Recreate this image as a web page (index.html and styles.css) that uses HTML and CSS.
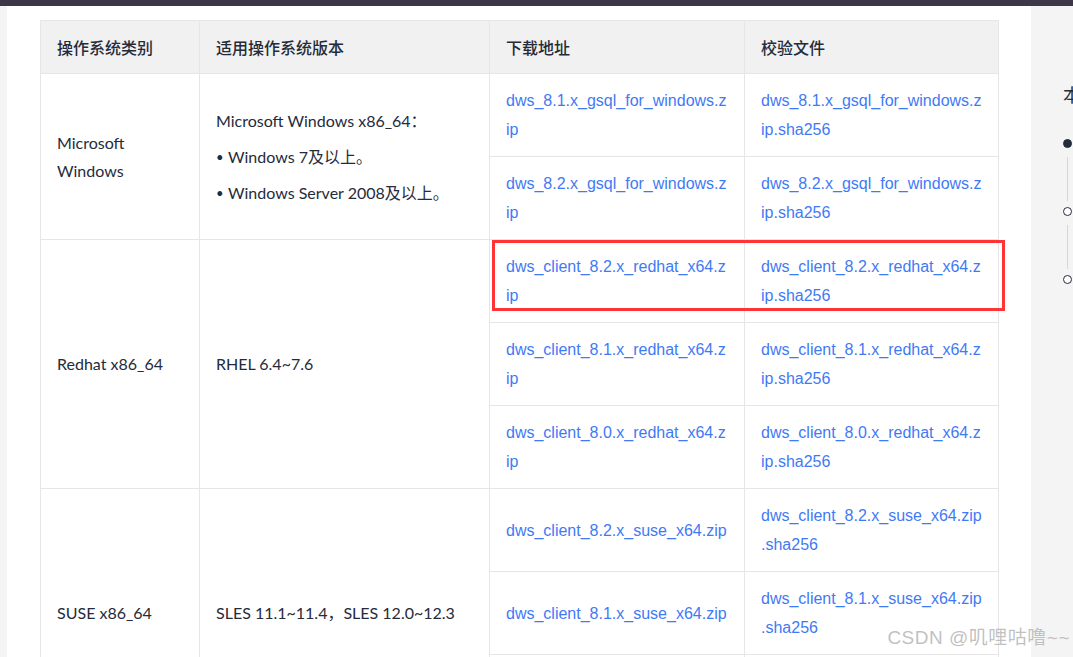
FILE: index.html
```html
<!DOCTYPE html>
<html lang="zh-CN">
<head>
<meta charset="utf-8">
<title>下载地址</title>
<link rel="stylesheet" href="styles.css">
</head>
<body>
<div class="topbar"></div>
<div class="page">
  <div class="left-strip"></div>
  <main class="main">
    <div class="table-wrap">
      <table class="dl-table">
        <colgroup>
          <col class="c1"><col class="c2"><col class="c3"><col class="c4">
        </colgroup>
        <thead>
          <tr><th>操作系统类别</th><th>适用操作系统版本</th><th>下载地址</th><th>校验文件</th></tr>
        </thead>
        <tbody>
          <tr>
            <td rowspan="2">Microsoft Windows</td>
            <td rowspan="2">
              <p class="ver-title">Microsoft Windows x86_64：</p>
              <ul class="ver-list">
                <li>Windows 7及以上。</li>
                <li>Windows Server 2008及以上。</li>
              </ul>
            </td>
            <td class="link"><a href="#">dws_8.1.x_gsql_for_windows.zip</a></td>
            <td class="link"><a href="#">dws_8.1.x_gsql_for_windows.zip.sha256</a></td>
          </tr>
          <tr>
            <td class="link"><a href="#">dws_8.2.x_gsql_for_windows.zip</a></td>
            <td class="link"><a href="#">dws_8.2.x_gsql_for_windows.zip.sha256</a></td>
          </tr>
          <tr>
            <td rowspan="3">Redhat x86_64</td>
            <td rowspan="3">RHEL 6.4~7.6</td>
            <td class="link"><a href="#">dws_client_8.2.x_redhat_x64.zip</a></td>
            <td class="link"><a href="#">dws_client_8.2.x_redhat_x64.zip.sha256</a></td>
          </tr>
          <tr>
            <td class="link"><a href="#">dws_client_8.1.x_redhat_x64.zip</a></td>
            <td class="link"><a href="#">dws_client_8.1.x_redhat_x64.zip.sha256</a></td>
          </tr>
          <tr>
            <td class="link"><a href="#">dws_client_8.0.x_redhat_x64.zip</a></td>
            <td class="link"><a href="#">dws_client_8.0.x_redhat_x64.zip.sha256</a></td>
          </tr>
          <tr>
            <td rowspan="3">SUSE x86_64</td>
            <td rowspan="3">SLES 11.1~11.4，SLES 12.0~12.3</td>
            <td class="link"><a href="#">dws_client_8.2.x_suse_x64.zip</a></td>
            <td class="link"><a href="#">dws_client_8.2.x_suse_x64.zip.sha256</a></td>
          </tr>
          <tr>
            <td class="link"><a href="#">dws_client_8.1.x_suse_x64.zip</a></td>
            <td class="link"><a href="#">dws_client_8.1.x_suse_x64.zip.sha256</a></td>
          </tr>
          <tr>
            <td class="link"><a href="#">dws_client_8.0.x_suse_x64.zip</a></td>
            <td class="link"><a href="#">dws_client_8.0.x_suse_x64.zip.sha256</a></td>
          </tr>
        </tbody>
      </table>
      <div class="highlight-box"></div>
    </div>
  </main>
  <aside class="aside">
    <div class="aside-title">本页目录</div>
    <ul class="toc">
      <li class="toc-item active"><span class="toc-dot"></span><span class="toc-line"></span></li>
      <li class="toc-item"><span class="toc-dot"></span><span class="toc-line"></span></li>
      <li class="toc-item"><span class="toc-dot"></span></li>
    </ul>
  </aside>
</div>
<div class="watermark">CSDN @叽哩咕噜~~</div>
</body>
</html>
```

FILE: styles.css
```css
html, body {
  margin: 0;
  padding: 0;
  background: #ffffff;
}

body {
  font-family: "Lato", "Noto Sans CJK SC", sans-serif;
  color: #252b3a;
  overflow: hidden;
  height: 657px;
  position: relative;
}

.topbar {
  height: 6px;
  background: #3d3548;
}

.page {
  display: flex;
  align-items: stretch;
  min-height: 651px;
}

.left-strip {
  width: 7px;
  flex: none;
  background: #f4f4f4;
}

.main {
  flex: 1;
  padding: 14px 0 0 33px;
}

.aside {
  width: 42px;
  flex: none;
  background: #f4f4f4;
  padding-left: 32px;
  box-sizing: border-box;
  overflow: hidden;
  white-space: nowrap;
}

.table-wrap {
  position: relative;
  width: 958px;
}

.dl-table {
  border-collapse: collapse;
  table-layout: fixed;
  width: 958px;
  font-size: 16px;
}

.c1 { width: 159px; }
.c2 { width: 290px; }
.c3 { width: 255px; }
.c4 { width: 254px; }

.dl-table th,
.dl-table td {
  border: 1px solid #e6e6e6;
  text-align: left;
  vertical-align: middle;
}

.dl-table th {
  background: #f1f1f1;
  font-family: "Noto Sans CJK SC", sans-serif;
  font-weight: 500;
  font-size: 16px;
  line-height: 24px;
  padding: 14px 16px;
  color: #252b3a;
}

.dl-table td {
  padding: 12px 16px;
  line-height: 28px;
}

.dl-table td.link {
  line-height: 29px;
  font-family: "Liberation Sans", "Noto Sans CJK SC", sans-serif;
  word-break: break-all;
  line-break: anywhere;
}

.dl-table td.link a {
  color: #3f7af5;
  text-decoration: none;
}

.ver-title {
  margin: 0;
}

.ver-list {
  list-style: none;
  margin: 0;
  padding: 0;
}

.ver-list li {
  margin-top: 8px;
}

.ver-list li::before {
  content: "•";
  display: inline-block;
  width: 12px;
  font-size: 13px;
  vertical-align: 1px;
}

.highlight-box {
  position: absolute;
  left: 452px;
  top: 220px;
  width: 513px;
  height: 71px;
  border: 3px solid #ff3434;
  box-sizing: border-box;
  pointer-events: none;
}

.aside-title {
  margin-top: 77px;
  font-family: "Noto Sans CJK SC", sans-serif;
  font-size: 18px;
  line-height: 22px;
  color: #252b3a;
}

.toc {
  list-style: none;
  margin: 34px 0 0 0;
  padding: 0;
}

.toc-item {
  display: flex;
  flex-direction: column;
  align-items: flex-start;
}

.toc-dot {
  width: 9px;
  height: 9px;
  border-radius: 50%;
  border: 1.5px solid #252b3a;
  box-sizing: border-box;
  background: #fff;
}

.toc-item.active .toc-dot {
  background: #252b3a;
}

.toc-line {
  width: 1px;
  height: 44px;
  background: #d6d6d6;
  margin: 9px 0 6px 4px;
}

.watermark {
  position: absolute;
  right: 3px;
  bottom: 8px;
  font-family: "Liberation Sans", "Noto Sans CJK SC", sans-serif;
  font-size: 19px;
  letter-spacing: 0.5px;
  color: rgba(150, 150, 150, 0.6);
  text-shadow: 0 0 1px rgba(255, 255, 255, 0.8);
  pointer-events: none;
}
```
